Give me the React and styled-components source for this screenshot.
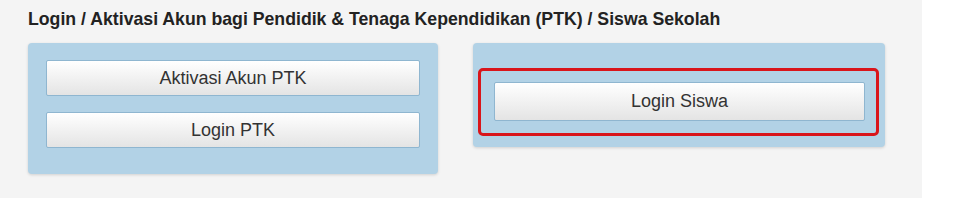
import React from "react";
import styled, { createGlobalStyle } from "styled-components";

const GlobalStyle = createGlobalStyle`
  body {
    margin: 0;
    background: #ffffff;
    font-family: "Liberation Sans", Arial, sans-serif;
  }
`;

const Page = styled.div`
  width: 922px;
  height: 198px;
  box-sizing: border-box;
  background: #f4f4f4;
  padding: 8px 0 0 28px;
`;

const Title = styled.h3`
  margin: 0;
  font-size: 17.7px;
  line-height: 22px;
  font-weight: bold;
  color: #222;
  white-space: nowrap;
`;

const Row = styled.div`
  display: flex;
  align-items: flex-start;
  gap: 35px;
  margin-top: 13px;
`;

const Panel = styled.div`
  width: ${(p) => p.$width}px;
  box-sizing: border-box;
  background: #b2d2e6;
  border-radius: 4px;
  box-shadow: 0 1px 3px rgba(0, 0, 0, 0.15);
  padding: ${(p) => p.$padding};
  display: flex;
  flex-direction: column;
  gap: 16px;
`;

const Highlight = styled.div`
  border: 3px solid #d9151b;
  border-radius: 5px;
  padding: 11px 11px 12px 13px;
`;

const Button = styled.button`
  display: block;
  width: 100%;
  height: ${(p) => p.$height || 36}px;
  box-sizing: border-box;
  border: 1px solid #8fb6d0;
  border-radius: 2px;
  background: linear-gradient(#ffffff, #e4e4e4);
  font-family: "Liberation Sans", Arial, sans-serif;
  font-size: 18px;
  color: #333;
  cursor: pointer;
`;

export default function App() {
  return (
    <>
      <GlobalStyle />
      <Page>
        <Title>
          Login / Aktivasi Akun bagi Pendidik &amp; Tenaga Kependidikan (PTK) / Siswa Sekolah
        </Title>
        <Row>
          <Panel $width={410} $padding="17px 18px 26px">
            <Button>Aktivasi Akun PTK</Button>
            <Button>Login PTK</Button>
          </Panel>
          <Panel $width={412} $padding="25px 6px 11px 5px">
            <Highlight>
              <Button $height={39}>Login Siswa</Button>
            </Highlight>
          </Panel>
        </Row>
      </Page>
    </>
  );
}
